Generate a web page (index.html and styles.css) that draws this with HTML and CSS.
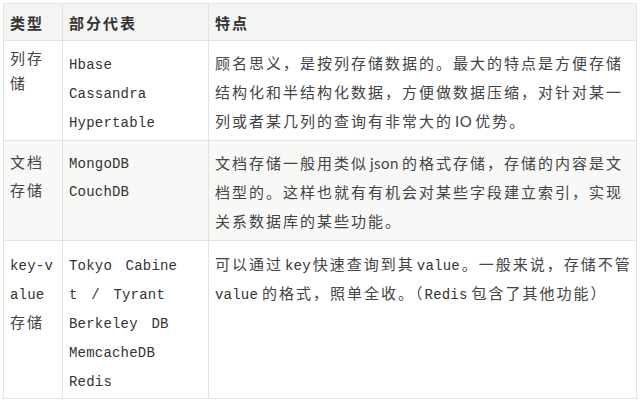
FILE: index.html
```html
<!DOCTYPE html>
<html lang="zh">
<head>
<meta charset="utf-8">
<link rel="stylesheet" href="styles.css">
</head>
<body>
<table class="tbl">
  <colgroup>
    <col class="c1"><col class="c2"><col class="c3">
  </colgroup>
  <tr class="head">
    <th>类型</th><th>部分代表</th><th>特点</th>
  </tr>
  <tr class="r1">
    <td class="k k-tight">列存储</td>
    <td class="m"><div class="ln"><span class="en">Hbase</span></div><div class="ln"><span class="en">Cassandra</span></div><div class="ln"><span class="en">Hypertable</span></div></td>
    <td class="d">顾名思义，是按列存储数据的。最大的特点是方便存储结构化和半结构化数据，方便做数据压缩，对针对某一列或者某几列的查询有非常大的<span class="lat">IO</span>优势。</td>
  </tr>
  <tr class="r2 alt">
    <td class="k">文档存储</td>
    <td class="m"><div class="ln"><span class="en">MongoDB</span></div><div class="ln"><span class="en">CouchDB</span></div></td>
    <td class="d">文档存储一般用类似<span class="lat">json</span>的格式存储，存储的内容是文档型的。这样也就有有机会对某些字段建立索引，实现关系数据库的某些功能。</td>
  </tr>
  <tr class="r3">
    <td class="k"><span class="en">key-value</span>存储</td>
    <td class="m"><div class="ln2"><span class="en">Tokyo Cabinet / Tyrant</span></div><div class="ln"><span class="en">Berkeley DB</span></div><div class="ln"><span class="en">MemcacheDB</span></div><div class="ln"><span class="en">Redis</span></div></td>
    <td class="d">可以通过<span class="en sp">key</span>快速查询到其<span class="en sp">value</span>。一般来说，存储不管<span class="en spr">value</span>的格式，照单全收。（<span class="en spr">Redis</span>包含了其他功能）</td>
  </tr>
</table>
</body>
</html>
```

FILE: styles.css
```css
html, body {
  margin: 0;
  padding: 0;
  background: #ffffff;
}

.tbl {
  margin: 3px 0 0 3px;
  width: 633px;
  table-layout: fixed;
  border-collapse: collapse;
  border: 1px solid #e2e2e2;
  font-family: "Noto Sans CJK SC", "Noto Sans", sans-serif;
  font-size: 15px;
  letter-spacing: 2px;
  color: #444;
}

.c1 { width: 59px; }
.c2 { width: 146px; }
.c3 { width: 428px; }

.tbl th,
.tbl td {
  border: 1px solid #e2e2e2;
  padding: 0 6px;
  text-align: left;
  line-height: 29px;
  word-break: break-all;
}

.head {
  height: 37px;
  background: #f4f4f2;
}

.head th {
  vertical-align: middle;
  font-weight: bold;
  color: #333;
}

.tbl td {
  vertical-align: top;
}

.r1 { height: 100px; }
.r2 { height: 100px; }
.r3 { height: 158px; }

.alt { background: #f8f8f7; }

.tbl .r1 td { padding-top: 7px; }
.tbl .r2 td { padding-top: 7px; }
.tbl .r3 td { padding-top: 8px; }

.tbl .r1 td.k-tight {
  padding-top: 4px;
  line-height: 25px;
}

.r2 td.k,
.r2 td.m .ln {
  line-height: 28px;
  height: 28px;
}

.ln {
  height: 29px;
  line-height: 29px;
}

.ln2 {
  line-height: 29px;
}

.tbl td.m {
  padding-right: 27px;
}

.tbl td.d {
  padding-right: 0;
}

.en {
  font-family: "Liberation Mono", "DejaVu Sans Mono", monospace;
  font-size: 14px;
  line-height: 1;
  letter-spacing: 0.2px;
  word-spacing: 5px;
  color: #333;
}

.lat {
  font-family: "Lato", "Liberation Sans", sans-serif;
  font-size: 15px;
  line-height: 1;
  letter-spacing: 0.5px;
  margin: 0 3px 0 2px;
}

.sp {
  margin: 0 2px;
}

.spr {
  margin-right: 4px;
}
```
